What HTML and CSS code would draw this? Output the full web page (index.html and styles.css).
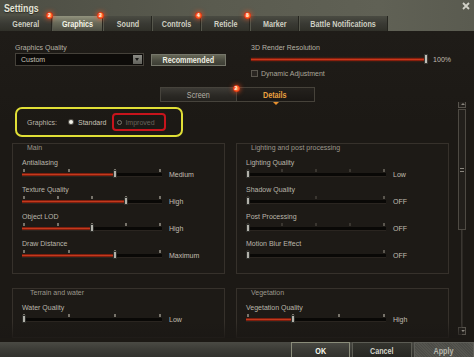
FILE: index.html
```html
<!DOCTYPE html>
<html>
<head>
<meta charset="utf-8">
<title>Settings</title>
<link rel="stylesheet" href="styles.css">
</head>
<body>
<div class="window">
  <header class="head">
    <div class="titlebar">
      <span class="title c">Settings</span>
      <svg class="close" width="8" height="8" viewBox="0 0 8 8"><path d="M1 1L7 7M7 1L1 7" stroke="#d2d2c8" stroke-width="1.8"/></svg>
    </div>
    <nav class="tabs">
      <div class="tab"><span class="c">General</span><i class="badge">2</i></div>
      <div class="tab active"><span class="c">Graphics</span><i class="badge">2</i></div>
      <div class="tab"><span class="c">Sound</span></div>
      <div class="tab"><span class="c">Controls</span><i class="badge">4</i></div>
      <div class="tab"><span class="c">Reticle</span><i class="badge">8</i></div>
      <div class="tab"><span class="c">Marker</span></div>
      <div class="tab"><span class="c">Battle Notifications</span></div>
    </nav>
  </header>

  <main class="body">
    <section class="general">
      <div class="col-left">
        <div class="lbl">Graphics Quality</div>
        <div class="gq-row">
          <div class="select"><span>Custom</span><span class="arrow"></span></div>
          <div class="btn-rec"><span class="c">Recommended</span></div>
        </div>
      </div>
      <div class="col-right">
        <div class="lbl">3D Render Resolution</div>
        <div class="res-row">
          <div class="res-slider"><span class="res-thumb"></span></div>
          <span class="res-val">100%</span>
        </div>
        <div class="check"><span class="box"></span>Dynamic Adjustment</div>
      </div>
    </section>

    <div class="subtabs">
      <div class="subtab"><span class="c">Screen</span><i class="badge">2</i></div>
      <div class="subtab active"><span class="c">Details</span><i class="pointer"></i></div>
    </div>

    <div class="scroll">
      <div class="content">
        <div class="mode">
          <span class="mode-label">Graphics:</span>
          <span class="radio on"><i></i>Standard</span>
          <span class="radio off"><i></i>Improved</span>
        </div>

        <div class="groups">
          <section class="group">
            <h3>Main</h3>
            <div class="setting">
              <div class="slabel">Antialiasing</div>
              <div class="srow">
                <div class="slider" style="--v:.6667">
                  <div class="ticks"><i></i><i></i><i></i><i></i></div>
                  <div class="track"><div class="fill"></div></div>
                  <span class="thumb"></span>
                </div>
                <span class="sval">Medium</span>
              </div>
            </div>
            <div class="setting">
              <div class="slabel">Texture Quality</div>
              <div class="srow">
                <div class="slider" style="--v:.75">
                  <div class="ticks"><i></i><i></i><i></i><i></i><i></i></div>
                  <div class="track"><div class="fill"></div></div>
                  <span class="thumb"></span>
                </div>
                <span class="sval">High</span>
              </div>
            </div>
            <div class="setting">
              <div class="slabel">Object LOD</div>
              <div class="srow">
                <div class="slider" style="--v:.5">
                  <div class="ticks"><i></i><i></i><i></i><i></i><i></i></div>
                  <div class="track"><div class="fill"></div></div>
                  <span class="thumb"></span>
                </div>
                <span class="sval">High</span>
              </div>
            </div>
            <div class="setting">
              <div class="slabel">Draw Distance</div>
              <div class="srow">
                <div class="slider" style="--v:.6667">
                  <div class="ticks"><i></i><i></i><i></i><i></i></div>
                  <div class="track"><div class="fill"></div></div>
                  <span class="thumb"></span>
                </div>
                <span class="sval">Maximum</span>
              </div>
            </div>
          </section>

          <section class="group">
            <h3>Lighting and post processing</h3>
            <div class="setting">
              <div class="slabel">Lighting Quality</div>
              <div class="srow">
                <div class="slider" style="--v:0">
                  <div class="ticks dim"><i></i><i></i><i></i><i></i><i></i></div>
                  <div class="track"><div class="fill"></div></div>
                  <span class="thumb"></span>
                </div>
                <span class="sval">Low</span>
              </div>
            </div>
            <div class="setting">
              <div class="slabel">Shadow Quality</div>
              <div class="srow">
                <div class="slider" style="--v:0">
                  <div class="ticks dim"><i></i><i></i><i></i></div>
                  <div class="track"><div class="fill"></div></div>
                  <span class="thumb"></span>
                </div>
                <span class="sval">OFF</span>
              </div>
            </div>
            <div class="setting">
              <div class="slabel">Post Processing</div>
              <div class="srow">
                <div class="slider" style="--v:0">
                  <div class="ticks dim"><i></i><i></i><i></i><i></i><i></i></div>
                  <div class="track"><div class="fill"></div></div>
                  <span class="thumb"></span>
                </div>
                <span class="sval">OFF</span>
              </div>
            </div>
            <div class="setting">
              <div class="slabel">Motion Blur Effect</div>
              <div class="srow">
                <div class="slider" style="--v:0">
                  <div class="ticks dim"><i></i><i></i></div>
                  <div class="track"><div class="fill"></div></div>
                  <span class="thumb"></span>
                </div>
                <span class="sval">OFF</span>
              </div>
            </div>
          </section>

          <section class="group">
            <h3>Terrain and water</h3>
            <div class="setting">
              <div class="slabel">Water Quality</div>
              <div class="srow">
                <div class="slider" style="--v:0">
                  <div class="ticks"><i></i><i></i><i></i><i></i></div>
                  <div class="track"><div class="fill"></div></div>
                  <span class="thumb"></span>
                </div>
                <span class="sval">Low</span>
              </div>
            </div>
          </section>

          <section class="group">
            <h3>Vegetation</h3>
            <div class="setting">
              <div class="slabel">Vegetation Quality</div>
              <div class="srow">
                <div class="slider" style="--v:.3333">
                  <div class="ticks"><i></i><i></i><i></i><i></i></div>
                  <div class="track"><div class="fill"></div></div>
                  <span class="thumb"></span>
                </div>
                <span class="sval">High</span>
              </div>
            </div>
          </section>
        </div>
      </div>

      <div class="scrollbar">
        <span class="sb-btn up"></span>
        <span class="sb-thumb"><i></i></span>
        <span class="sb-track"></span>
        <span class="sb-btn down"></span>
      </div>
    </div>
  </main>

  <footer class="footer">
    <div class="fbtn ok"><span class="c">OK</span></div>
    <div class="fbtn cancel"><span class="c">Cancel</span></div>
    <div class="fbtn apply"><span class="c">Apply</span></div>
  </footer>
</div>
</body>
</html>
```

FILE: styles.css
```css
* { box-sizing: border-box; margin: 0; padding: 0; }
html, body { width: 474px; height: 357px; overflow: hidden; background: #1b1815; }
body { font-family: "Liberation Sans", Arial, sans-serif; font-size: 7px; color: #c2beb2; }
.window { width: 474px; height: 357px; display: flex; flex-direction: column; }
.c { display: inline-block; transform: scaleX(.8); }

/* header */
.head { background: linear-gradient(90deg, #4d4e44, #5a5b4f 45%, #606155 80%, #5a5b50); }
.titlebar { height: 16px; display: flex; align-items: center; justify-content: space-between; padding: 0 4px 0 4px; }
.title { font-weight: bold; font-size: 11px; color: #e4e4d8; transform-origin: left center; text-shadow: 0 1px 1px #2a2a24; }
.close { margin-top: -4px; }

.tabs { height: 15px; display: grid; grid-template-columns: 52px 51px 49px 49px 49px 49px 89px; }
.tab { position: relative; display: flex; align-items: center; justify-content: center; background: linear-gradient(#4a4b42, #3a3a34 50%, #303029); border-right: 1px solid #25251f; border-left: 1px solid #56574c; font-weight: bold; font-size: 9px; color: #cfcfc2; white-space: nowrap; }
.tab:first-child { border-left: none; }
.tab.active { background: linear-gradient(#92937e, #6a6b5a 45%, #4c4d42); color: #f4f4e8; }

.badge { position: absolute; top: -4px; right: -2px; width: 7px; height: 7px; border-radius: 50%; background: radial-gradient(circle, #ffb27a 0%, #ff5b24 45%, #d22a0c 75%, #a01a06 100%); box-shadow: 0 0 4px 1px rgba(255, 80, 30, .55); font-style: normal; font-weight: bold; font-size: 5px; line-height: 7px; text-align: center; color: #fff3e0; z-index: 2; }

/* body */
.body { flex: 1; display: flex; flex-direction: column; background: linear-gradient(#1f1c18, #1c1915 30%); padding-bottom: 4px; }
.general { height: 56px; display: flex; gap: 25px; padding: 12px 0 0 15px; }
.col-left { width: 211px; }
.col-right { width: 200px; }
.lbl { height: 10px; line-height: 10px; color: #b6b2a6; }
.gq-row { display: flex; align-items: center; gap: 7px; }
.select { width: 129px; height: 13px; display: flex; align-items: center; justify-content: space-between; padding: 0 1px 0 5px; background: #0d0b09; border: 1px solid #45413a; color: #c6c2b6; }
.select .arrow { width: 9px; height: 9px; background: linear-gradient(#8a8a84, #62625c); position: relative; }
.select .arrow::after { content: ""; position: absolute; left: 2px; top: 3px; border-left: 2.5px solid transparent; border-right: 2.5px solid transparent; border-top: 3px solid #1a1a18; }
.btn-rec { width: 75px; height: 12px; display: flex; align-items: center; justify-content: center; background: linear-gradient(#666757, #4a4b40 55%, #3c3d34); border: 1px solid #75766a; color: #f0f0e4; font-weight: bold; font-size: 9px; white-space: nowrap; }

.res-row { height: 12px; display: flex; align-items: center; }
.res-slider { position: relative; width: 180px; height: 3px; background: linear-gradient(#6a1306, #c8391c 50%, #6a1306); box-shadow: 0 0 2px rgba(200, 50, 20, .5); }
.res-thumb { position: absolute; right: 0; top: -4px; width: 4px; height: 10px; background: linear-gradient(90deg, #9a9a94, #e6e6de 50%, #9a9a94); border: 1px solid #3a3a36; }
.res-val { margin-left: 5px; color: #c2beb2; }
.check { margin-top: 3px; height: 10px; display: flex; align-items: center; gap: 3px; color: #aaa69a; }
.check .box { width: 7px; height: 7px; background: #2a2622; border: 1px solid #5a564e; }

/* sub tabs */
.subtabs { height: 15px; display: flex; justify-content: center; }
.subtab { position: relative; width: 77px; display: flex; align-items: center; justify-content: center; font-size: 9px; white-space: nowrap; }
.subtab:first-child { background: linear-gradient(#3c3a35, #2a2824 60%, #24221e); border: 1px solid #46433c; color: #b4b0a6; }
.subtab.active { width: 78px; background: linear-gradient(#24211d, #1a1714); border: 1px solid #46423a; border-left: none; color: #eaa040; font-weight: bold; }
.subtab .badge { top: -3px; right: -4px; }
.pointer { position: absolute; left: 36px; bottom: -4px; border-left: 3px solid transparent; border-right: 3px solid transparent; border-top: 3px solid #e8902e; }

/* scroll area */
.scroll { flex: 1; display: flex; position: relative; overflow: hidden; }
.scroll::after { content: ""; position: absolute; left: 0; right: 12px; bottom: 0; height: 16px; background: linear-gradient(rgba(27, 24, 21, 0), rgba(27, 24, 21, .85)); pointer-events: none; }
.content { width: 458px; padding-top: 5px; overflow: hidden; }

.mode { margin-left: 15px; width: 168px; height: 30px; border: 2px solid #e0df36; border-radius: 7px; display: flex; align-items: center; padding-left: 10px; color: #bcb8ac; }
.mode-label { width: 42px; }
.radio { display: flex; align-items: center; }
.radio i { display: inline-block; border-radius: 50%; }
.radio.on i { width: 4px; height: 4px; background: #f2f2ea; box-shadow: 0 0 0 1px #55524c; margin-right: 5px; }
.radio.on { color: #c8c4b8; }
.radio.off { margin-left: 6px; height: 18px; padding: 0 9px 0 3px; border: 2px solid #c8141c; border-radius: 4px; color: #68645c; }
.radio.off i { width: 5px; height: 5px; border: 1px solid #7a766e; margin-right: 3px; }

.groups { margin: 6px 0 0 12px; display: grid; grid-template-columns: 213px 213px; column-gap: 11px; row-gap: 14px; }
.group { border: 1px solid #36312b; background: #1d1a16; padding: 0 0 7px 9px; }
.group h3 { height: 14px; line-height: 8px; padding-left: 5px; font-weight: normal; font-size: 7px; color: #9c988c; }
.group:nth-child(3) h3 { padding-left: 8px; }
.setting { height: 27px; }
.slabel { height: 10px; line-height: 10px; color: #bab6aa; }
.srow { height: 12px; display: flex; align-items: center; }
.sval { margin-left: 7px; color: #c2beb2; }

.slider { position: relative; width: 140px; height: 12px; }
.ticks { height: 4px; display: flex; justify-content: space-between; padding: 0 1px; }
.ticks i { width: 2px; height: 3px; margin-top: 1px; background: #77736a; }
.ticks.dim i { background: #3a3630; }
.ticks.dim i:last-child { background: #5a564e; }
.track { margin-top: 1px; height: 3px; background: #090806; box-shadow: 0 1px 0 #2a2520; }
.fill { height: 3px; width: calc((100% - 4px) * var(--v) + 2px); background: linear-gradient(#5e1106, #c23a1e 50%, #5e1106); }
.thumb { position: absolute; top: 2px; left: calc((100% - 4px) * var(--v)); width: 4px; height: 8px; background: linear-gradient(90deg, #8c8c86, #d6d6ce 50%, #8c8c86); border: 1px solid #2e2e2a; }

/* scrollbar */
.scrollbar { width: 8px; margin: -2px 0 3px 0; display: flex; flex-direction: column; align-items: center; }
.sb-btn { position: relative; width: 8px; height: 8px; border: 1px solid #57534c; background: #24211d; }
.sb-btn::after { content: ""; position: absolute; left: 1.5px; border-left: 2px solid transparent; border-right: 2px solid transparent; }
.sb-btn.up::after { top: 2px; border-bottom: 2px solid #8a867e; }
.sb-btn.down::after { top: 2px; border-top: 2px solid #8a867e; }
.sb-thumb { margin-top: 1px; width: 8px; height: 121px; border: 1px solid #4e4a43; background: #221f1b; display: flex; align-items: center; justify-content: center; }
.sb-thumb i { width: 4px; height: 4px; border-top: 1px solid #8a867e; border-bottom: 1px solid #8a867e; }
.sb-track { flex: 1; width: 2px; background: #2c2924; border-left: 1px solid #3a3631; }

/* footer */
.footer { height: 20px; display: flex; justify-content: flex-end; align-items: flex-end; gap: 2px; background: linear-gradient(#4a4a44, #3a3a35 50%, #2f2f2b); }
.fbtn { width: 60px; height: 17px; display: flex; align-items: center; justify-content: center; font-weight: bold; font-size: 9px; }
.ok { width: 59px; background: linear-gradient(#83857 0, #7c7e6a 0, #5a5c4d 60%, #4c4e42); border: 1px solid #8a8c7a; color: #fbfbf0; }
.cancel { background: linear-gradient(#35352f, #262622); border: 1px solid #5c5c54; color: #d4d4ca; }
.apply { background: repeating-linear-gradient(45deg, #55554f 0 1px, #4c4c47 1px 2px); border: 1px solid #5e5e58; color: #b8b8ae; }
```
